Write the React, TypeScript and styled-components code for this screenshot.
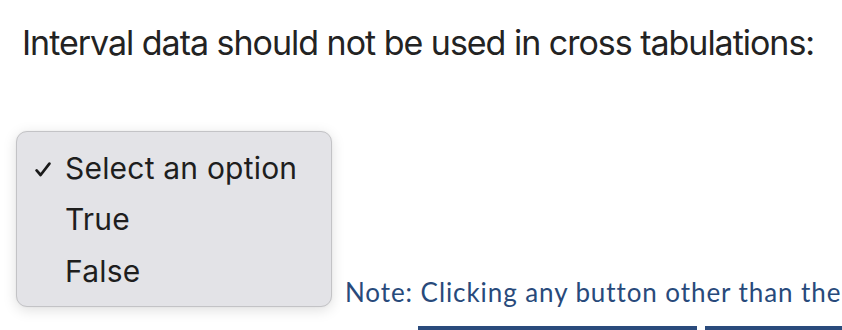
import React from "react";
import styled, { createGlobalStyle } from "styled-components";

const Global = createGlobalStyle`
  html, body { margin: 0; padding: 0; background: #ffffff; }
  body { width: 842px; height: 330px; overflow: hidden; }
`;

const Page = styled.div`
  padding-left: 22px;
  padding-top: 23px;
  width: 842px;
  height: 330px;
  overflow: hidden;
  box-sizing: border-box;
`;

const Heading = styled.h1`
  margin: 0;
  font-family: Inter, "Liberation Sans", sans-serif;
  font-weight: 400;
  font-size: 34px;
  line-height: 40px;
  letter-spacing: -1.02px;
  color: #232323;
  white-space: nowrap;
`;

const Row = styled.div`
  display: flex;
  align-items: flex-end;
  gap: 13px;
  margin-top: 68px;
  margin-left: -6px;
`;

const Menu = styled.ul`
  list-style: none;
  margin: 0;
  padding: 10px 0 10px 0;
  width: 316px;
  height: 176px;
  box-sizing: border-box;
  flex: none;
  background: #e3e3e7;
  border: 1px solid #c3c3c6;
  border-radius: 11px;
  box-shadow: 0 3px 14px rgba(0, 0, 0, 0.13), 0 0 2px rgba(0, 0, 0, 0.06);
`;

const Item = styled.li`
  display: flex;
  align-items: center;
  height: 51.5px;
  padding-left: 18px;
  font-family: Inter, "Liberation Sans", sans-serif;
  font-size: 30px;
  letter-spacing: 0.2px;
  color: #1e1e1e;
  white-space: nowrap;
`;

const CheckSlot = styled.span`
  width: 30px;
  flex: none;
  display: flex;
  align-items: center;
  padding-top: 4px;
`;

const Note = styled.p`
  margin: 0;
  font-family: Lato, "Open Sans", sans-serif;
  font-size: 26px;
  line-height: 30px;
  letter-spacing: 0.92px;
  color: #284a7b;
  white-space: nowrap;
`;

const Buttons = styled.div`
  display: flex;
  gap: 8px;
  margin-top: 19px;
  margin-left: 396px;
`;

const Button = styled.button<{ $w: number }>`
  width: ${(p) => p.$w}px;
  height: 4px;
  flex: none;
  border: none;
  background: #2a4b7c;
  padding: 0;
`;

const Check = () => (
  <svg width="16" height="15" viewBox="0 0 16 15" fill="none">
    <path
      d="M1.6 8.4 L5.6 13 L14.4 1.6"
      stroke="#1a1a1a"
      strokeWidth="2.7"
      strokeLinecap="round"
      strokeLinejoin="round"
    />
  </svg>
);

const options = ["Select an option", "True", "False"];

export default function App() {
  return (
    <>
      <Global />
      <Page>
        <Heading>Interval data should not be used in cross tabulations:</Heading>
        <Row>
          <Menu>
            {options.map((o, i) => (
              <Item key={o}>
                <CheckSlot>{i === 0 ? <Check /> : null}</CheckSlot>
                {o}
              </Item>
            ))}
          </Menu>
          <Note>Note: Clicking any button other than the</Note>
        </Row>
        <Buttons>
          <Button $w={279} />
          <Button $w={137} />
        </Buttons>
      </Page>
    </>
  );
}
